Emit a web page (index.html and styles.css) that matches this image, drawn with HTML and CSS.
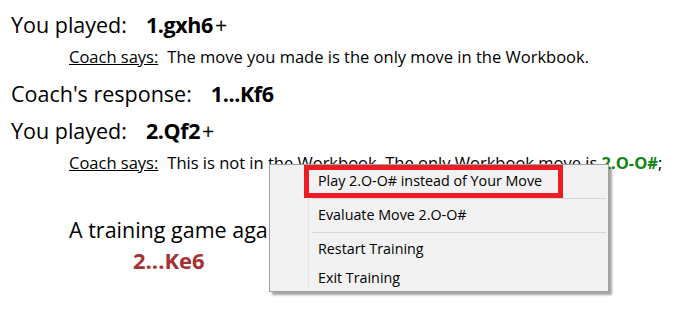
FILE: index.html
```html
<!DOCTYPE html>
<html>
<head>
<meta charset="utf-8">
<link rel="stylesheet" href="styles.css">
</head>
<body>
<div class="page">
  <div class="big"><span class="label">You played:</span><span class="move">1.gxh6</span><span class="check">+</span></div>
  <div class="coach"><span class="says">Coach says:</span><span class="msg">The move you made is the only move in the Workbook.</span></div>
  <div class="big"><span class="label">Coach's response:</span><span class="move">1...Kf6</span></div>
  <div class="big"><span class="label">You played:</span><span class="move">2.Qf2</span><span class="check">+</span></div>
  <div class="coach"><span class="says">Coach says:</span><span class="msg">This is not in the Workbook. The only Workbook move is <b class="green">2.O-O#</b>;</span></div>
  <div class="training">A training game against the Workbook</div>
  <div class="reply">2...Ke6</div>
</div>
<div class="menu">
  <div class="gutter"></div>
  <div class="item first"><span>Play 2.O-O# instead of Your Move</span></div>
  <div class="sep"></div>
  <div class="item"><span>Evaluate Move 2.O-O#</span></div>
  <div class="sep"></div>
  <div class="item"><span>Restart Training</span></div>
  <div class="item last"><span>Exit Training</span></div>
  <div class="hl"></div>
</div>
</body>
</html>
```
FILE: styles.css
```css
html, body {
  margin: 0;
  padding: 0;
  background: #fff;
}
body {
  font-family: "Open Sans", "Noto Sans", sans-serif;
  color: #000;
  width: 699px;
  height: 309px;
  overflow: hidden;
  position: relative;
}
.page {
  padding: 6px 0 0 11px;
  display: flex;
  flex-direction: column;
}
.big {
  font-size: 21.5px;
  height: 37px;
  line-height: 37px;
  white-space: nowrap;
}
.label {
  margin-right: 19px;
}
.move {
  font-weight: bold;
  letter-spacing: -0.4px;
}
.check {
  font-weight: normal;
  margin-left: 2px;
}
.coach {
  font-size: 16.5px;
  padding-left: 58px;
  height: 32px;
  line-height: 28px;
  white-space: nowrap;
}
.says {
  text-decoration: underline;
  margin-right: 9px;
}
.green {
  color: #108510;
}
.training {
  font-size: 21.5px;
  padding-left: 58px;
  margin-top: 34px;
  line-height: 30px;
  white-space: nowrap;
}
.reply {
  font-size: 22px;
  font-weight: bold;
  color: #a33232;
  padding-left: 122px;
  line-height: 30px;
}
.menu {
  position: absolute;
  left: 269px;
  top: 164px;
  width: 340px;
  height: 128px;
  box-sizing: border-box;
  background: #f2f2f2;
  border: 1px solid #a0a0a0;
  box-shadow: 3px 3px 2px rgba(0,0,0,0.35);
  font-family: "Open Sans", "Noto Sans", sans-serif;
  font-size: 14.3px;
  padding-top: 2px;
}
.gutter {
  position: absolute;
  left: 38px;
  top: 2px;
  bottom: 2px;
  width: 1px;
  background: #e3e3e3;
}
.item {
  height: 29px;
  line-height: 28px;
  padding-left: 48px;
  color: #000;
  white-space: nowrap;
}
.item.last { height: 27px; line-height: 27px; }
.sep {
  height: 1px;
  background: #d7d7d7;
  margin: 2px 2px 2px 42px;
}
.hl {
  position: absolute;
  left: 34px;
  top: 0px;
  width: 249px;
  height: 23px;
  border: 5px solid #ee1c25;
}
```
